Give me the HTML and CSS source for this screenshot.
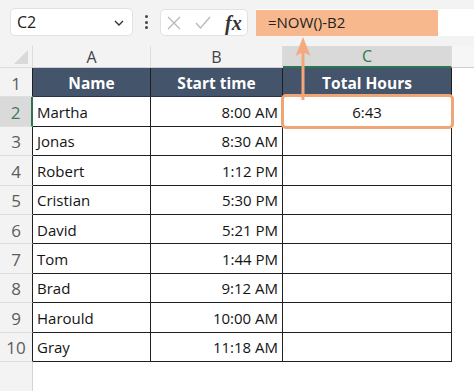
FILE: index.html
```html
<!DOCTYPE html>
<html lang="en">
<head>
<meta charset="UTF-8">
<meta name="viewport" content="width=device-width, initial-scale=1.0">
<title>NOW minus start time</title>
<link rel="stylesheet" href="styles.css">
</head>
<body>

<div class="toolbar">
    <div class="namebox">
        <span>C2</span>
        <svg class="chevron" width="10" height="6" viewBox="0 0 10 6"><path d="M1 1 L5 5 L9 1" fill="none" stroke="#333" stroke-width="1.4"/></svg>
    </div>
    <div class="dots"><i></i><i></i><i></i></div>
    <div class="fxbox">
        <svg width="14" height="14" viewBox="0 0 14 14"><path d="M1 1 L13 13 M13 1 L1 13" stroke="#b8b8b8" stroke-width="1.3"/></svg>
        <svg width="16" height="13" viewBox="0 0 16 13"><path d="M1 7 L5.5 12 L15 1" fill="none" stroke="#b8b8b8" stroke-width="1.3"/></svg>
        <span class="fx">fx</span>
    </div>
    <div class="formula">
        <div class="formula-text">=NOW()-B2</div>
    </div>
</div>

<div class="sheet">
    <div class="corner"><span class="tri"></span></div>
    <div class="colhead">A</div>
    <div class="colhead">B</div>
    <div class="colhead active">C</div>
    <div class="colhead rest"></div>

    <div class="rowhead">1</div>
    <div class="cell head">Name</div>
    <div class="cell head">Start time</div>
    <div class="cell head">Total Hours</div>
    <div class="blank"></div>

    <div class="rowhead active">2</div>
    <div class="cell">Martha</div>
    <div class="cell time">8:00 AM</div>
    <div class="cell result">6:43<span class="mark"></span></div>
    <div class="blank"></div>

    <div class="rowhead">3</div>
    <div class="cell">Jonas</div>
    <div class="cell time">8:30 AM</div>
    <div class="cell"></div>
    <div class="blank"></div>

    <div class="rowhead">4</div>
    <div class="cell">Robert</div>
    <div class="cell time">1:12 PM</div>
    <div class="cell"></div>
    <div class="blank"></div>

    <div class="rowhead">5</div>
    <div class="cell">Cristian</div>
    <div class="cell time">5:30 PM</div>
    <div class="cell"></div>
    <div class="blank"></div>

    <div class="rowhead">6</div>
    <div class="cell">David</div>
    <div class="cell time">5:21 PM</div>
    <div class="cell"></div>
    <div class="blank"></div>

    <div class="rowhead">7</div>
    <div class="cell">Tom</div>
    <div class="cell time">1:44 PM</div>
    <div class="cell"></div>
    <div class="blank"></div>

    <div class="rowhead">8</div>
    <div class="cell">Brad</div>
    <div class="cell time">9:12 AM</div>
    <div class="cell"></div>
    <div class="blank"></div>

    <div class="rowhead">9</div>
    <div class="cell">Harould</div>
    <div class="cell time">10:00 AM</div>
    <div class="cell"></div>
    <div class="blank"></div>

    <div class="rowhead">10</div>
    <div class="cell">Gray</div>
    <div class="cell time">11:18 AM</div>
    <div class="cell"></div>
    <div class="blank"></div>

    <div class="rowhead spare"></div>
    <div class="empty"></div>
</div>

<!-- arrow from C2 up to the formula bar -->
<svg class="arrow" width="474" height="391" viewBox="0 0 474 391">
    <line x1="303" y1="100" x2="303" y2="50" stroke="#f2a679" stroke-width="3"/>
    <polygon points="295.5,56 303,37 310.5,56 303,52" fill="#f4aa7e"/>
</svg>

</body>
</html>
```

FILE: styles.css
```css
body {
    margin: 0;
    background-color: #f3f3f3;
    font-family: 'Open Sans', 'Noto Sans', sans-serif;
    color: #1a1a1a;
    width: 474px;
    height: 391px;
    overflow: hidden;
    position: relative;
}
.toolbar {
    height: 46px;
    display: flex;
    align-items: flex-start;
    padding: 8px 0 0 10px;
    box-sizing: border-box;
}
.namebox {
    width: 123px;
    height: 28px;
    box-sizing: border-box;
    background: white;
    border: 1px solid #e2e2e2;
    border-radius: 5px;
    display: flex;
    align-items: center;
    justify-content: space-between;
    padding: 0 8px 0 6px;
    font-size: 16px;
    color: #222;
}
.chevron {
    margin-top: 2px;
}
.dots {
    width: 27px;
    height: 28px;
    display: flex;
    flex-direction: column;
    align-items: center;
    justify-content: center;
    gap: 2.5px;
}
.dots i {
    width: 3px;
    height: 3px;
    border-radius: 50%;
    background: #444;
}
.fxbox {
    width: 88px;
    height: 27px;
    margin-top: 1px;
    box-sizing: border-box;
    background: white;
    border: 1px solid #e2e2e2;
    border-radius: 5px;
    display: flex;
    align-items: center;
    gap: 14px;
    padding-left: 6px;
}
.fx {
    font-family: 'Liberation Serif', 'DejaVu Serif', serif;
    font-style: italic;
    font-weight: bold;
    font-size: 20px;
    color: #333;
    line-height: 1;
}
.formula {
    margin-left: 8px;
    flex: 1;
    height: 27px;
    margin-top: 1px;
    background: white;
}
.formula-text {
    width: 182px;
    height: 26px;
    margin-top: 1px;
    background: #f7b88d;
    box-sizing: border-box;
    padding-left: 12px;
    font-size: 15px;
    line-height: 25px;
    color: #222;
}
.sheet {
    display: grid;
    grid-template-columns: 33px 118px 132px 169px 1fr;
    grid-template-rows: 22px repeat(10, 29.4px) 1fr;
    height: 345px;
}
.corner {
    background: #f3f3f3;
    border-right: 1px solid #dcdcdc;
    border-bottom: 1px solid #dcdcdc;
    position: relative;
}
.tri {
    position: absolute;
    right: 4px;
    bottom: 3px;
    width: 0;
    height: 0;
    border-left: 14px solid transparent;
    border-bottom: 14px solid #d9d9d9;
}
.colhead {
    background: #f3f3f3;
    border-right: 1px solid #dcdcdc;
    border-bottom: 1px solid #cfcfcf;
    display: flex;
    align-items: center;
    justify-content: center;
    font-size: 16px;
    color: #444;
}
.colhead.active {
    background: #d9d9d9;
    color: #2f7a52;
    border-bottom: 2px solid #2d7550;
}
.colhead.rest {
    background: #f6f6f6;
    border-right: none;
}
.rowhead {
    background: #f3f3f3;
    border-right: 1px solid #1f1f1f;
    border-bottom: 1px solid #dedede;
    display: flex;
    align-items: center;
    justify-content: center;
    font-size: 17px;
    color: #5c5c5c;
    padding-top: 2px;
    box-sizing: border-box;
}
.rowhead.active {
    background: #dadada;
    color: #3f7a5a;
    border-right: 2px solid #2d7550;
}
.rowhead.spare {
    border-right-color: #d4d4d4;
    border-bottom: none;
}
.cell {
    background: white;
    border-right: 1px solid #1f1f1f;
    border-bottom: 1px solid #1f1f1f;
    display: flex;
    align-items: center;
    padding: 1px 4px 0 4px;
    font-size: 15px;
    color: #141414;
    white-space: nowrap;
}
.cell.head {
    background: #44546a;
    color: white;
    font-weight: bold;
    font-size: 15.5px;
    justify-content: center;
    border-bottom-color: #2a3444;
}
.cell.time {
    justify-content: flex-end;
}
.cell.result {
    justify-content: center;
    position: relative;
}
.mark {
    position: absolute;
    left: -2px;
    top: -3px;
    right: -3px;
    bottom: -3px;
    border: 3px solid #f0a574;
    border-radius: 5px;
}
.blank {
    background: white;
}
.empty {
    grid-column: 2 / 6;
    background: white;
}
.arrow {
    position: absolute;
    left: 0;
    top: 0;
    pointer-events: none;
}
```
